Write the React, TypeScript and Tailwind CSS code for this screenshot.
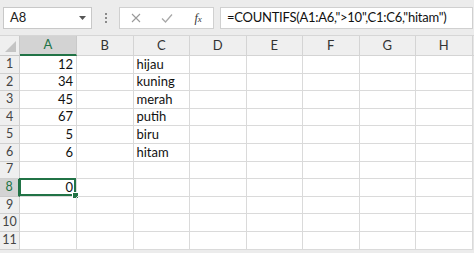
import React from "react";

const cols = ["A", "B", "C", "D", "E", "F", "G", "H"];
const data: Record<number, { a?: string; c?: string }> = {
  1: { a: "12", c: "hijau" },
  2: { a: "34", c: "kuning" },
  3: { a: "45", c: "merah" },
  4: { a: "67", c: "putih" },
  5: { a: "5", c: "biru" },
  6: { a: "6", c: "hitam" },
  8: { a: "0" },
};

const font = { fontFamily: "Lato, 'Open Sans', sans-serif" };

function Toolbar() {
  return (
    <div className="flex h-[36px] items-center gap-0 border-b border-[#d6d6d6] bg-[#ececec]">
      <div className="ml-[3px] flex h-[22px] w-[89px] items-center justify-between border border-[#c8c8c8] bg-white pl-[6px] pr-[5px]">
        <span className="text-[13px] text-[#222]">A8</span>
        <svg width="7" height="4" viewBox="0 0 7 4">
          <path d="M0 0h7L3.5 4z" fill="#555" />
        </svg>
      </div>
      <div className="flex w-[27px] flex-col items-center gap-[2px]">
        <span className="h-[2px] w-[2px] bg-[#8a8a8a]" />
        <span className="h-[2px] w-[2px] bg-[#8a8a8a]" />
        <span className="h-[2px] w-[2px] bg-[#8a8a8a]" />
      </div>
      <div className="flex h-[22px] w-[95px] items-center border border-[#d0d0d0] bg-white">
        <div className="flex w-[32px] justify-center">
          <svg width="10" height="10" viewBox="0 0 10 10">
            <path d="M1 1l8 8M9 1l-8 8" stroke="#9a9a9a" strokeWidth="1.1" />
          </svg>
        </div>
        <div className="flex w-[32px] justify-center">
          <svg width="12" height="10" viewBox="0 0 12 10">
            <path d="M1 5.5l3.5 3.5L11 1.5" stroke="#a8a8a8" strokeWidth="1.3" fill="none" />
          </svg>
        </div>
        <div className="flex w-[30px] justify-center">
          <span className="text-[12px] italic text-[#333]" style={{ fontFamily: "'Liberation Serif', serif" }}>
            f<span className="text-[9px]">x</span>
          </span>
        </div>
      </div>
      <div className="ml-[6px] mr-[1px] flex h-[22px] flex-1 items-center border border-[#d0d0d0] bg-white pl-[6px]">
        <span className="whitespace-nowrap text-[13px] tracking-[-0.25px] text-[#111]">=COUNTIFS(A1:A6,"&gt;10",C1:C6,"hitam")</span>
      </div>
    </div>
  );
}

function Grid() {
  const rows = Array.from({ length: 11 }, (_, i) => i + 1);
  return (
    <div className="grid grid-cols-[20px_57px_56.5px_56.5px_56.5px_56.5px_56.5px_56.5px_56.5px_1fr] grid-rows-[20px_repeat(11,17.6px)] bg-white">
      <div className="relative border-r border-b border-[#c9c9c9] bg-[#efefef]">
        <svg className="absolute bottom-[3px] right-[3px]" width="11" height="11" viewBox="0 0 11 11">
          <path d="M11 0v11H0z" fill="#c4c4c4" />
        </svg>
      </div>
      {cols.map((c) => (
        <div
          key={c}
          className={
            c === "A"
              ? "flex items-center justify-center border-r border-b-2 border-r-[#c9c9c9] border-b-[#217346] bg-[#d3d3d3] text-[13px] text-[#217346]"
              : "flex items-center justify-center border-r border-b border-[#d4d4d4] bg-[#efefef] text-[13px] text-[#333]"
          }
        >
          {c}
        </div>
      ))}
      <div className="border-b border-[#d4d4d4] bg-[#e6e6e6]" />
      {rows.map((r) => (
        <React.Fragment key={r}>
          <div
            className={
              r === 8
                ? "flex items-center justify-center border-b border-r-2 border-b-[#c9c9c9] border-r-[#217346] bg-[#d3d3d3] text-[12.5px] text-[#217346]"
                : "flex items-center justify-center border-r border-b border-[#d0d0d0] bg-[#efefef] text-[12.5px] text-[#444]"
            }
          >
            {r}
          </div>
          {cols.map((c) => {
            const v = data[r];
            const isSel = r === 8 && c === "A";
            return (
              <div
                key={c}
                className={
                  "relative flex items-center border-r border-b border-[#dadada] text-[13px] text-[#111] " +
                  (c === "A" ? "justify-end pr-[3px]" : "justify-start pl-[3px]")
                }
              >
                {c === "A" && v?.a}
                {c === "C" && v?.c}
                {isSel && (
                  <>
                    <div className="absolute -left-px -top-px h-[calc(100%+1px)] w-[calc(100%+1px)] border-2 border-[#217346]" />
                    <div className="absolute -bottom-[3px] -right-[3px] h-[7px] w-[7px] border border-white bg-[#217346]" />
                  </>
                )}
              </div>
            );
          })}
          <div className="border-b border-[#e6e6e6] bg-[#e6e6e6]" />
        </React.Fragment>
      ))}
    </div>
  );
}

export default function App() {
  return (
    <div className="h-[253px] w-[474px] overflow-hidden bg-[#ececec]" style={font}>
      <Toolbar />
      <Grid />
    </div>
  );
}
